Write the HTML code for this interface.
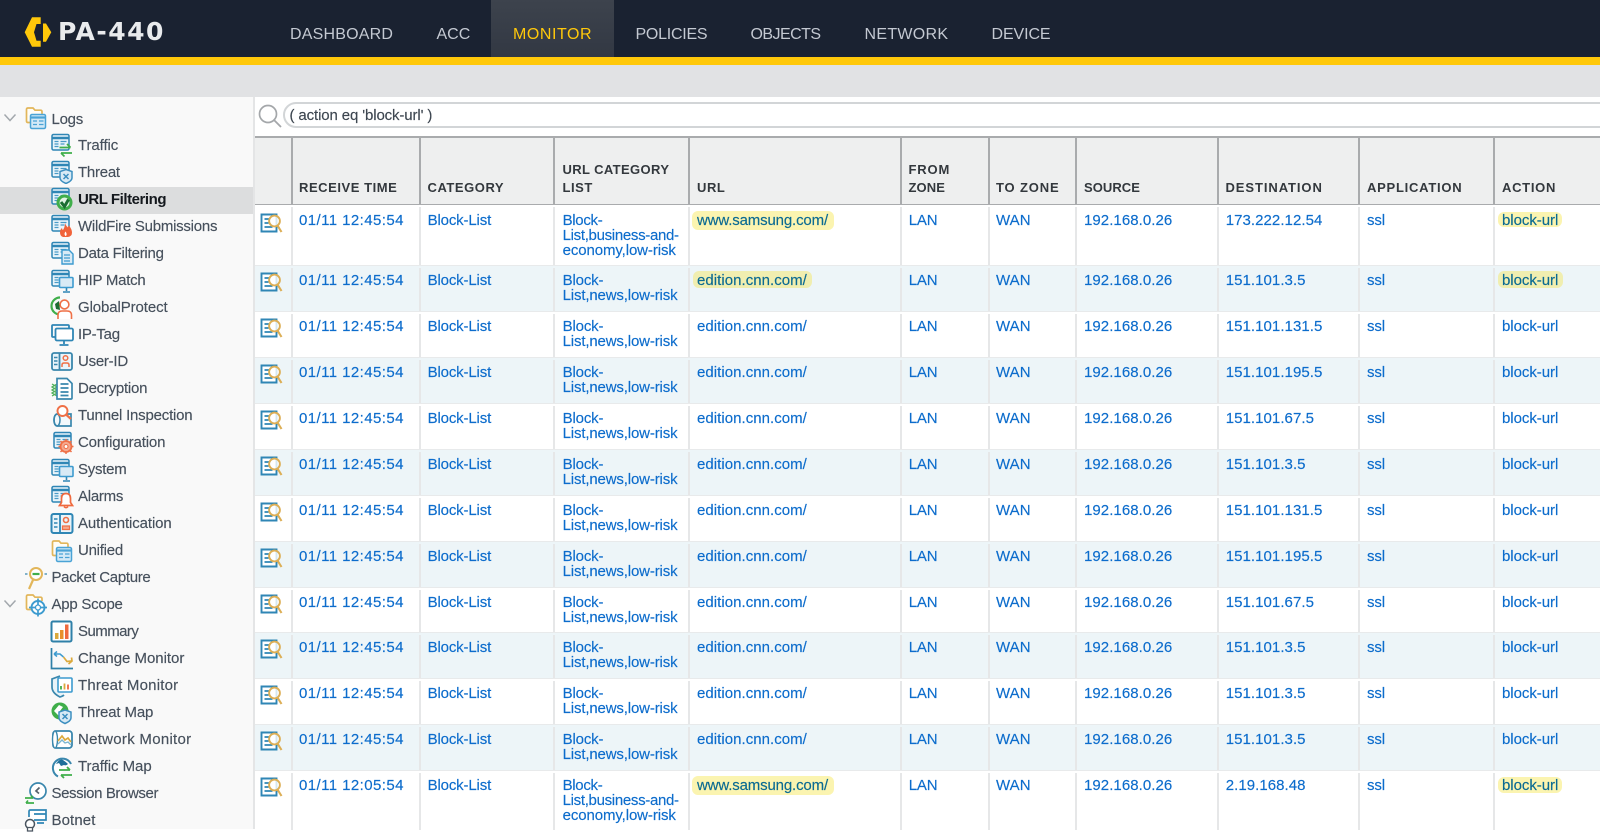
<!DOCTYPE html>
<html lang="en">
<head>
<meta charset="utf-8">
<title>PA-440 Monitor</title>
<style>
html,body{margin:0;padding:0;width:1600px;height:829px;overflow:hidden;background:#fff;font-family:"Liberation Sans",sans-serif}
div,span,svg{position:absolute;box-sizing:border-box}
.top{left:0;top:0;width:1600px;height:57px;background:#1a2231}
.yl{left:0;top:57px;width:1600px;height:8px;background:#ffc80a}
.gb{left:0;top:65px;width:1600px;height:32px;background:#e1e2e4}
.act{left:491px;top:0;width:123px;height:57px;background:linear-gradient(#3d434d,#323843)}
.n{top:26px;font-size:16px;line-height:18px;color:#c4c9d2;white-space:nowrap}
.logo{left:58px;top:15px;font:bold 25px/34px "DejaVu Sans",sans-serif;letter-spacing:1.5px;color:#e9ebed;white-space:nowrap}
.side{left:0;top:97px;width:253px;height:732px;background:#f9f9f9}
.sdiv{left:253px;top:97px;width:2px;height:732px;background:#e4e5e6}
.sel{left:0;top:187px;width:253px;height:26.5px;background:#dcddde}
.s{font-size:15px;line-height:18px;color:#46505c;letter-spacing:-.25px;white-space:nowrap;left:78px;-webkit-text-stroke:.15px #46505c}
.p{left:51.5px}
.b{font-weight:bold;color:#14181d;letter-spacing:-.45px;-webkit-text-stroke:0}
.i{width:24px;height:24px;left:50px}
.ip{left:24px}
.q{left:283px;top:102px;width:1330px;height:26px;border:2px solid #d2d5d7;border-radius:13px 0 0 13px;background:#fff}
.qt{left:289.5px;top:106.5px;font-size:15px;line-height:18px;color:#3d4650;letter-spacing:-.12px;white-space:nowrap;-webkit-text-stroke:.15px #3d4650}
.hd{left:255px;top:135.5px;width:1345px;height:70.5px;background:#eeefef;border-top:2px solid #a9abad;border-bottom:2px solid #a9abad}
.hs{top:136px;width:2px;height:70px;background:#a9abad}
.h{font-weight:bold;font-size:13px;line-height:18px;color:#33383d;letter-spacing:.55px;white-space:nowrap}
.r{left:255px;width:1345px;background-color:#fff;border-top:1px solid #e8eaeb;overflow:hidden;
background-image:linear-gradient(#e6e7e8,#e6e7e8),linear-gradient(#e6e7e8,#e6e7e8),linear-gradient(#e6e7e8,#e6e7e8),linear-gradient(#e6e7e8,#e6e7e8),linear-gradient(#e6e7e8,#e6e7e8),linear-gradient(#e6e7e8,#e6e7e8),linear-gradient(#e6e7e8,#e6e7e8),linear-gradient(#e6e7e8,#e6e7e8),linear-gradient(#e6e7e8,#e6e7e8),linear-gradient(#e6e7e8,#e6e7e8);
background-repeat:no-repeat;background-size:2px 100%;
background-position:36px 2px,163.6px 2px,298px 2px,433px 2px,645px 2px,732.7px 2px,820px 2px,961.7px 2px,1103px 2px,1238px 2px}
.a{background-color:#edf5f8}
.c{top:7px;font-size:15px;line-height:15px;color:#0c6ccc;white-space:nowrap;letter-spacing:-.15px;-webkit-text-stroke:.15px currentColor}
.c1{left:44px;letter-spacing:.42px}.c2{left:172.6px}.c3{left:307.6px}.c4{left:442px;letter-spacing:.04px}.c5{left:653.7px}.c6{left:741px;letter-spacing:.05px}.c7{left:829px;letter-spacing:.06px}.c8{left:970.7px;letter-spacing:.06px}.c9{left:1112px}.c10{left:1247px;letter-spacing:-.05px}
.ws{letter-spacing:-.15px}
.biz{letter-spacing:-.31px}
.biz i{font-style:normal;letter-spacing:-.1px}
.hl{color:#0a6a92;z-index:2}
.m{background:#fbf4b0;border-radius:6px;z-index:1}
.a .m{background:#f0eeb0}
.ri{left:5px;top:5px;width:24px;height:24px}
</style>
</head>
<body>
<svg width="0" height="0" style="left:0;top:0">
<defs>
<g id="tb"><rect x="2" y="1.5" width="17" height="15.5" rx="1.5" fill="#e9f4fa" stroke="#2f86b5" stroke-width="1.5"/><path d="M2 5h17" stroke="#2f86b5" stroke-width="2.6"/><path d="M4.5 8.5h4M4.5 11h4M4.5 13.5h4M10.5 8.5h6M10.5 11h4" stroke="#4a9ac6" stroke-width="1.3"/></g>
<g id="fd"><path d="M2.5 15V3.500q0-1.500 1.500-1.500h5l2 2.200h5.500q1.500 0 1.500 1.500V8" fill="#fffdf6" stroke="#e2b65a" stroke-width="1.700"/><path d="M2.500 15q0 1.500 1.500 1.500h3" fill="none" stroke="#e2b65a" stroke-width="1.700"/></g>
<symbol id="i-logs" viewBox="0 0 24 24"><use href="#fd"/><rect x="6.500" y="8.500" width="15" height="14" rx="1.500" fill="#d3e9f6" stroke="#4aa3d6" stroke-width="1.500"/><path d="M6.500 11.500h15" stroke="#4aa3d6" stroke-width="2.200"/><path d="M9 15h4M9 18.500h4M15 15h4.500M15 18.500h4.500" stroke="#4aa3d6" stroke-width="1.300"/></symbol>
<symbol id="i-traffic" viewBox="0 0 24 24"><use href="#tb"/><path d="M9.500 14.500h11m-3.500-3.500l3.500 3.500M22 20H11m3.500 3.500L11 20" fill="none" stroke="#3fae4a" stroke-width="1.700"/></symbol>
<symbol id="i-threat" viewBox="0 0 24 24"><use href="#tb"/><path d="M16 9.500l6 2v6.500q0 3-6 5.500q-6-2.500-6-5.500v-6.500z" fill="#d8eaf5" stroke="#3d8fc0" stroke-width="1.500"/><path d="M13.500 14l5 5m0-5l-5 5" stroke="#3d8fc0" stroke-width="1.500"/></symbol>
<symbol id="i-url" viewBox="0 0 24 24"><use href="#tb"/><circle cx="14.500" cy="15.500" r="8" fill="#3fae4a"/><circle cx="14.500" cy="15.500" r="5" fill="#fff" opacity=".85"/><path d="M11 15l3.500 4.500 4-7" fill="none" stroke="#1c6e32" stroke-width="3"/></symbol>
<symbol id="i-fire" viewBox="0 0 24 24"><use href="#tb"/><path d="M15 9q1 3 3 4.500q0-1.500 1-2q3 4 3 7q0 4-4 4.500h-5q-3-1-3-4.500q0-3 2-4.500q0 1.500 1 2q2-3 2-7z" fill="#f1633a"/><path d="M15.500 22q-2-2 0-4.500q2 2.500 .5 4.500z" fill="#fff"/></symbol>
<symbol id="i-data" viewBox="0 0 24 24"><use href="#tb"/><path d="M12 9h7l4 4v10H12z" fill="#d8eaf5" stroke="#3d9bcf" stroke-width="1.400"/><path d="M14 14h6M14 17h6M14 20h6" stroke="#3d9bcf" stroke-width="1.300"/></symbol>
<symbol id="i-hip" viewBox="0 0 24 24"><use href="#tb"/><rect x="9.500" y="8.500" width="13.500" height="10" rx="1" fill="#d8eaf5" stroke="#3d9bcf" stroke-width="1.600"/><path d="M16.500 19v3M13 23h7" stroke="#2f86b5" stroke-width="1.600"/></symbol>
<symbol id="i-gp" viewBox="0 0 24 24"><path d="M10 1.500a8.500 8.500 0 1 0 0 17" fill="none" stroke="#3fae4a" stroke-width="2.200"/><path d="M9 5l-4 3 1 5 4 1z" fill="#1d6d32"/><circle cx="14.500" cy="8.500" r="4.400" fill="#fff" stroke="#ef7047" stroke-width="1.600"/><path d="M8 23v-4q0-4 4-4h5q4.500 0 4.500 4v4" fill="#fff" stroke="#ef7047" stroke-width="1.600"/></symbol>
<symbol id="i-ip" viewBox="0 0 24 24"><path d="M5 14H3q-1 0-1-1V3q0-1 1-1h15q1 0 1 1v2" fill="none" stroke="#2f86b5" stroke-width="1.800"/><rect x="5.500" y="5.500" width="17.500" height="12" rx="1.500" fill="#fff" stroke="#2f86b5" stroke-width="1.800"/><path d="M14 18v3M9.500 22h9" stroke="#2f86b5" stroke-width="1.800"/></symbol>
<symbol id="i-user" viewBox="0 0 24 24"><rect x="2" y="3" width="20" height="17" rx="2" fill="#e9f4fa" stroke="#3a87ad" stroke-width="1.800"/><path d="M9.500 3v17" stroke="#3a87ad" stroke-width="1.800"/><path d="M4 7.500h3.500M4 11h3.500M4 14.500h3.500" stroke="#3a87ad" stroke-width="1.500"/><circle cx="15.500" cy="8" r="2.300" fill="none" stroke="#ef7047" stroke-width="1.500"/><path d="M12 17v-2q0-2 2-2h3q2 0 2 2v2" fill="none" stroke="#ef7047" stroke-width="1.500"/></symbol>
<symbol id="i-dec" viewBox="0 0 24 24"><path d="M2 7l5 3-5 3 5 3-5 3M7 7l-5 3 5 3-5 3 5 3" fill="none" stroke="#4fb05a" stroke-width="1.300"/><path d="M7 1.500h10l5 5V21q0 1-1 1H7z" fill="#fff" stroke="#3a87ad" stroke-width="1.700"/><path d="M10.500 7h8M10.500 11h8M10.500 15h8M10.500 18.500h8" stroke="#3a87ad" stroke-width="1.700"/></symbol>
<symbol id="i-tun" viewBox="0 0 24 24"><path d="M7 10H21V22H7q-3-1-3-6t3-6z" fill="#f3f9fc" stroke="#3a87ad" stroke-width="1.700"/><ellipse cx="7" cy="16" rx="3" ry="6" fill="none" stroke="#3a87ad" stroke-width="1.500"/><circle cx="12.500" cy="7" r="5" fill="#fff" stroke="#ef7047" stroke-width="1.900"/><path d="M16 10.500l5 4.500" stroke="#ef7047" stroke-width="2.200"/></symbol>
<symbol id="i-cfg" viewBox="0 0 24 24"><g transform="translate(2 0)"><use href="#tb"/></g><circle cx="16" cy="15.500" r="5.500" fill="#f5a98f" stroke="#ef7047" stroke-width="1.800"/><circle cx="16" cy="15.500" r="2" fill="#fff" stroke="#ef7047" stroke-width="1.100"/><path d="M16 8v2.500M16 20.500V23M8.500 15.500H11M21 15.500h2.500M10.500 10l2 2M19.500 19l2 2M21.500 10l-2 2M12.500 19l-2 2" stroke="#ef7047" stroke-width="1.500"/></symbol>
<symbol id="i-bell" viewBox="0 0 24 24"><use href="#tb"/><path d="M16 8.500q4.500 0 4.500 5v4l2 3H9.500l2-3v-4q0-5 4.500-5z" fill="#fff" stroke="#ef6a3f" stroke-width="1.700"/><path d="M14 21.500q2 2.500 4 0" stroke="#ef6a3f" stroke-width="1.600" fill="none"/></symbol>
<symbol id="i-auth" viewBox="0 0 24 24"><rect x="1.500" y="2" width="21" height="19" rx="2" fill="#e9f4fa" stroke="#2f86b5" stroke-width="2"/><path d="M10 2v19" stroke="#2f86b5" stroke-width="1.800"/><path d="M4 7h3.500M4 11h3.500M4 15h3.500" stroke="#2f86b5" stroke-width="1.500"/><circle cx="16" cy="8" r="2.500" fill="none" stroke="#ef7047" stroke-width="1.600"/><path d="M12.500 14h7v3.500h-7z" fill="#f5a98f" stroke="#ef7047" stroke-width="1.200"/></symbol>
<symbol id="i-pc" viewBox="0 0 24 24"><circle cx="12" cy="8" r="6" fill="#fff" stroke="#e2b65a" stroke-width="2"/><path d="M8.500 8h7" stroke="#3fae4a" stroke-width="2.200"/><path d="M9 14L5 23" stroke="#e2b65a" stroke-width="2.200"/><path d="M1 8h2.500M20.500 8H23" stroke="#3a87ad" stroke-width="1.300"/></symbol>
<symbol id="i-app" viewBox="0 0 24 24"><use href="#fd"/><circle cx="14" cy="14.500" r="6.500" fill="#fff" stroke="#3d9bcf" stroke-width="1.900"/><path d="M14 5.500v18M5 14.500h18" stroke="#3d9bcf" stroke-width="1.700"/><circle cx="14" cy="14.500" r="2.500" fill="#fff" stroke="#3d9bcf" stroke-width="1.300"/></symbol>
<symbol id="i-sum" viewBox="0 0 24 24"><rect x="1.500" y="1.500" width="20" height="20" rx="1.500" fill="#fff" stroke="#2f80a8" stroke-width="2"/><path d="M5 13h3.500v6H5z" fill="#dba93c"/><path d="M10 10h3.500v9H10z" fill="#e8912c"/><path d="M15 4.500h3.500V19H15z" fill="#ef6a3f"/></symbol>
<symbol id="i-chg" viewBox="0 0 24 24"><path d="M1.500 1v20.500H23" fill="none" stroke="#2f80a8" stroke-width="1.700"/><path d="M4 7l3-2.500M4 7l3 2.500M4 7h6l3.500 3" fill="none" stroke="#3d9bcf" stroke-width="1.500"/><path d="M13.500 10l3.500 4.500 5-.5m-3.500 3l3.500-3-.5-3.500" fill="none" stroke="#dba93c" stroke-width="1.700"/></symbol>
<symbol id="i-tm" viewBox="0 0 24 24"><path d="M10 2L2 5v8q0 6 8 10q3-1 4-2" fill="#e9f3f8" stroke="#3a87ad" stroke-width="1.700"/><rect x="8" y="4" width="14" height="14" rx="1" fill="#fff" stroke="#3d9bcf" stroke-width="1.600"/><path d="M11 12v3.500" stroke="#3fae4a" stroke-width="1.800"/><path d="M14.500 9.500v6" stroke="#dba93c" stroke-width="1.800"/><path d="M18 10.500v5" stroke="#ef6a3f" stroke-width="1.800"/></symbol>
<symbol id="i-map" viewBox="0 0 24 24"><circle cx="10" cy="10" r="8.500" fill="#3fae4a"/><path d="M4 10l5-6 4 2-3 4 3 3-3 3z" fill="#fff"/><path d="M15 9l6 2v6q0 3-6 5.500q-6-2.500-6-5.500v-6z" fill="#d8eaf5" stroke="#3d8fc0" stroke-width="1.500"/><path d="M12.500 13l5 5m0-5l-5 5" stroke="#3d8fc0" stroke-width="1.500"/></symbol>
<symbol id="i-net" viewBox="0 0 24 24"><rect x="3" y="3" width="19" height="17" rx="3" fill="#fff" stroke="#3a87ad" stroke-width="1.800"/><ellipse cx="5" cy="11.500" rx="2.500" ry="8.500" fill="#fff" stroke="#3a87ad" stroke-width="1.400"/><path d="M8 13l4-5 3 4 3-2 3 4" fill="none" stroke="#dba93c" stroke-width="1.700"/><path d="M8 16l4-4 3 3 3-1 3 3" fill="none" stroke="#7bb5d0" stroke-width="1.400"/></symbol>
<symbol id="i-tmap" viewBox="0 0 24 24"><path d="M8 21.500A9.500 9.500 0 1 1 21 9" fill="#fff" stroke="#3a87ad" stroke-width="2"/><path d="M6 9q4-6 7-4t5 4q-2 2-4 1l-3 1-2-3z" fill="#1f6f9a"/><path d="M9 15h11m-3-3l3 3M22 20H11m3 3l-3-3" fill="none" stroke="#3fae4a" stroke-width="1.800"/></symbol>
<symbol id="i-ses" viewBox="0 0 24 24"><circle cx="14" cy="9" r="8" fill="#fff" stroke="#3a87ad" stroke-width="1.700"/><path d="M15.500 5.500L12 9l3 2.500" fill="none" stroke="#55606b" stroke-width="1.700"/><path d="M1 16h8m-2-2.500l2 2.500M10 21H2m2-2.500L2 21" fill="none" stroke="#3fae4a" stroke-width="1.700"/></symbol>
<symbol id="i-bot" viewBox="0 0 24 24"><path d="M5 9V3.500q0-1.500 1.500-1.500H22v10H10" fill="#fff" stroke="#2f86b5" stroke-width="1.700"/><path d="M10 6h12M13 15h7" stroke="#2f86b5" stroke-width="1.700"/><circle cx="6" cy="16" r="4.500" fill="#fff" stroke="#4a5560" stroke-width="1.500"/><path d="M3.500 19.500h5V23h-5z" fill="#fff" stroke="#4a5560" stroke-width="1.300"/></symbol>
<symbol id="i-row" viewBox="0 0 24 24"><path d="M1.500 2.500h15v17h-15z" fill="#fff" stroke="#2f86b5" stroke-width="1.900"/><path d="M4.500 7h6M4.500 11h4M4.500 15h8" stroke="#2f86b5" stroke-width="1.700"/><circle cx="14.500" cy="9" r="5.400" fill="#fff" fill-opacity=".8" stroke="#dcae55" stroke-width="1.900"/><path d="M17.500 13.500l4 6.500" stroke="#dcae55" stroke-width="2.100"/></symbol>
</defs>
</svg>

<div class="top"></div>
<div class="act"></div>
<div class="yl"></div>
<div class="gb"></div>
<svg style="left:18px;top:10px" width="60" height="45" viewBox="0 0 60 45"><path d="M14 7.300H22.700V14H18.500L16 22.300L18.500 30.700H22.700V36.700H14L6.700 22.300Z" fill="#ffc80a"/><path d="M25 13.500H28L33.300 22.300L28 31.700H25Z" fill="#ffc80a"/></svg>
<div class="logo">PA-440</div>
<div class="n" style="left:290px;letter-spacing:.2px">DASHBOARD</div>
<div class="n" style="left:436.5px">ACC</div>
<div class="n" style="left:513px;color:#ffc80a;letter-spacing:.55px">MONITOR</div>
<div class="n" style="left:635.5px;letter-spacing:-.25px">POLICIES</div>
<div class="n" style="left:750.5px;letter-spacing:-.55px">OBJECTS</div>
<div class="n" style="left:864.5px;letter-spacing:.3px">NETWORK</div>
<div class="n" style="left:991.5px;letter-spacing:-.1px">DEVICE</div>

<div class="side"></div>
<div class="sel"></div>
<div class="sdiv"></div>
<svg style="left:3px;top:113px" width="14" height="10" viewBox="0 0 14 10"><path d="M1.500 1.500L7 7.500l5.500-6" fill="none" stroke="#a3a8ad" stroke-width="1.500"/></svg>
<svg style="left:3px;top:599px" width="14" height="10" viewBox="0 0 14 10"><path d="M1.500 1.500L7 7.500l5.500-6" fill="none" stroke="#a3a8ad" stroke-width="1.500"/></svg>

<svg class="i ip" style="top:106px"><use href="#i-logs"/></svg><div class="s p" style="top:110.500px">Logs</div>
<svg class="i" style="top:133px"><use href="#i-traffic"/></svg><div class="s" style="top:137px;letter-spacing:-.1px">Traffic</div>
<svg class="i" style="top:160px"><use href="#i-threat"/></svg><div class="s" style="top:164px">Threat</div>
<svg class="i" style="top:187px"><use href="#i-url"/></svg><div class="s b" style="top:191px">URL Filtering</div>
<svg class="i" style="top:214px"><use href="#i-fire"/></svg><div class="s" style="top:218px">WildFire Submissions</div>
<svg class="i" style="top:241px"><use href="#i-data"/></svg><div class="s" style="top:245px">Data Filtering</div>
<svg class="i" style="top:269px"><use href="#i-hip"/></svg><div class="s" style="top:272px">HIP Match</div>
<svg class="i" style="top:296px"><use href="#i-gp"/></svg><div class="s" style="top:299px;letter-spacing:-.1px">GlobalProtect</div>
<svg class="i" style="top:323px"><use href="#i-ip"/></svg><div class="s" style="top:326px">IP-Tag</div>
<svg class="i" style="top:350px"><use href="#i-user"/></svg><div class="s" style="top:353px">User-ID</div>
<svg class="i" style="top:377px"><use href="#i-dec"/></svg><div class="s" style="top:380px">Decryption</div>
<svg class="i" style="top:404px"><use href="#i-tun"/></svg><div class="s" style="top:407px;letter-spacing:-.2px">Tunnel Inspection</div>
<svg class="i" style="top:431px"><use href="#i-cfg"/></svg><div class="s" style="top:434px;letter-spacing:-.15px">Configuration</div>
<svg class="i" style="top:458px"><use href="#i-hip"/></svg><div class="s" style="top:461px">System</div>
<svg class="i" style="top:485px"><use href="#i-bell"/></svg><div class="s" style="top:488px">Alarms</div>
<svg class="i" style="top:512px"><use href="#i-auth"/></svg><div class="s" style="top:515px;letter-spacing:-.1px">Authentication</div>
<svg class="i" style="top:539px"><use href="#i-logs"/></svg><div class="s" style="top:542px">Unified</div>
<svg class="i ip" style="top:566px"><use href="#i-pc"/></svg><div class="s p" style="top:569px;letter-spacing:-.32px">Packet Capture</div>
<svg class="i ip" style="top:593px"><use href="#i-app"/></svg><div class="s p" style="top:596px">App Scope</div>
<svg class="i" style="top:620px"><use href="#i-sum"/></svg><div class="s" style="top:623px;letter-spacing:-.55px">Summary</div>
<svg class="i" style="top:647px"><use href="#i-chg"/></svg><div class="s" style="top:650px;letter-spacing:-.03px">Change Monitor</div>
<svg class="i" style="top:674px"><use href="#i-tm"/></svg><div class="s" style="top:677px;letter-spacing:.2px">Threat Monitor</div>
<svg class="i" style="top:701px"><use href="#i-map"/></svg><div class="s" style="top:704px;letter-spacing:-.15px">Threat Map</div>
<svg class="i" style="top:728px"><use href="#i-net"/></svg><div class="s" style="top:731px;letter-spacing:.28px">Network Monitor</div>
<svg class="i" style="top:755px"><use href="#i-tmap"/></svg><div class="s" style="top:758px;letter-spacing:-.05px">Traffic Map</div>
<svg class="i ip" style="top:782px"><use href="#i-ses"/></svg><div class="s p" style="top:785px;letter-spacing:-.4px">Session Browser</div>
<svg class="i ip" style="top:808px"><use href="#i-bot"/></svg><div class="s p" style="top:812px;letter-spacing:.1px">Botnet</div>

<svg style="left:254px;top:582px" width="6" height="12" viewBox="0 0 6 12"><path d="M5 2v8L1 6z" fill="#a6a9ac"/></svg>

<svg style="left:257px;top:103px" width="26" height="26" viewBox="0 0 26 26"><circle cx="11" cy="11" r="8.500" fill="none" stroke="#a4a7aa" stroke-width="1.700"/><path d="M17 17l7 7" stroke="#a4a7aa" stroke-width="1.800"/></svg>
<div class="q"></div>
<div class="qt">( action eq 'block-url' )</div>

<div class="hd"></div>
<div class="hs" style="left:291px"></div>
<div class="hs" style="left:418.6px"></div>
<div class="hs" style="left:553px"></div>
<div class="hs" style="left:688px"></div>
<div class="hs" style="left:900px"></div>
<div class="hs" style="left:987.7px"></div>
<div class="hs" style="left:1075px"></div>
<div class="hs" style="left:1216.7px"></div>
<div class="hs" style="left:1358px"></div>
<div class="hs" style="left:1493px"></div>
<div class="h" style="left:299px;top:179px">RECEIVE TIME</div>
<div class="h" style="left:427.5px;top:179px">CATEGORY</div>
<div class="h" style="left:562.5px;top:161px;letter-spacing:.38px">URL CATEGORY</div>
<div class="h" style="left:562.5px;top:179px">LIST</div>
<div class="h" style="left:697px;top:179px">URL</div>
<div class="h" style="left:908.5px;top:161px;letter-spacing:.85px">FROM</div>
<div class="h" style="left:908.5px;top:179px;letter-spacing:.1px">ZONE</div>
<div class="h" style="left:996px;top:179px;letter-spacing:.85px">TO ZONE</div>
<div class="h" style="left:1084px;top:179px;letter-spacing:.05px">SOURCE</div>
<div class="h" style="left:1225.5px;top:179px;letter-spacing:.92px">DESTINATION</div>
<div class="h" style="left:1367px;top:179px;letter-spacing:.75px">APPLICATION</div>
<div class="h" style="left:1502px;top:179px;letter-spacing:.7px">ACTION</div>

<div class="r" style="top:205px;height:60.2px;border-top:0"><svg class="ri" viewBox="0 0 24 24" style="top:7px"><use href="#i-row"/></svg><span class="c c1" style="top:7.5px">01/11 12:45:54</span><span class="c c2" style="top:7.5px">Block-List</span><span class="c c3 biz" style="top:7.5px">Block-<br>List,business-and-<br><i>economy,low-risk</i></span><span class="m" style="left:437px;top:6px;width:141.5px;height:19px"></span><span class="c c4 hl ws" style="top:7.5px">www.samsung.com/</span><span class="c c5" style="top:7.5px">LAN</span><span class="c c6" style="top:7.5px">WAN</span><span class="c c7" style="top:7.5px">192.168.0.26</span><span class="c c8" style="top:7.5px">173.222.12.54</span><span class="c c9" style="top:7.5px">ssl</span><span class="m" style="left:1242.5px;top:7px;width:64.5px;height:15px"></span><span class="c c10 hl" style="top:7.5px">block-url</span></div>

<div class="r a" style="top:265.2px;height:46px"><svg class="ri" viewBox="0 0 24 24"><use href="#i-row"/></svg><span class="c c1">01/11 12:45:54</span><span class="c c2">Block-List</span><span class="c c3">Block-<br>List,news,low-risk</span><span class="m" style="left:437.5px;top:5px;width:119px;height:17px"></span><span class="c c4 hl">edition.cnn.com/</span><span class="c c5">LAN</span><span class="c c6">WAN</span><span class="c c7">192.168.0.26</span><span class="c c8">151.101.3.5</span><span class="c c9">ssl</span><span class="m" style="left:1242.5px;top:5px;width:65px;height:17px"></span><span class="c c10 hl">block-url</span></div>

<div class="r" style="top:311.05px;height:46px"><svg class="ri" viewBox="0 0 24 24"><use href="#i-row"/></svg><span class="c c1">01/11 12:45:54</span><span class="c c2">Block-List</span><span class="c c3">Block-<br>List,news,low-risk</span><span class="c c4">edition.cnn.com/</span><span class="c c5">LAN</span><span class="c c6">WAN</span><span class="c c7">192.168.0.26</span><span class="c c8">151.101.131.5</span><span class="c c9">ssl</span><span class="c c10">block-url</span></div>

<div class="r a" style="top:356.9px;height:46px"><svg class="ri" viewBox="0 0 24 24"><use href="#i-row"/></svg><span class="c c1">01/11 12:45:54</span><span class="c c2">Block-List</span><span class="c c3">Block-<br>List,news,low-risk</span><span class="c c4">edition.cnn.com/</span><span class="c c5">LAN</span><span class="c c6">WAN</span><span class="c c7">192.168.0.26</span><span class="c c8">151.101.195.5</span><span class="c c9">ssl</span><span class="c c10">block-url</span></div>

<div class="r" style="top:402.75px;height:46px"><svg class="ri" viewBox="0 0 24 24"><use href="#i-row"/></svg><span class="c c1">01/11 12:45:54</span><span class="c c2">Block-List</span><span class="c c3">Block-<br>List,news,low-risk</span><span class="c c4">edition.cnn.com/</span><span class="c c5">LAN</span><span class="c c6">WAN</span><span class="c c7">192.168.0.26</span><span class="c c8">151.101.67.5</span><span class="c c9">ssl</span><span class="c c10">block-url</span></div>

<div class="r a" style="top:448.6px;height:46px"><svg class="ri" viewBox="0 0 24 24"><use href="#i-row"/></svg><span class="c c1">01/11 12:45:54</span><span class="c c2">Block-List</span><span class="c c3">Block-<br>List,news,low-risk</span><span class="c c4">edition.cnn.com/</span><span class="c c5">LAN</span><span class="c c6">WAN</span><span class="c c7">192.168.0.26</span><span class="c c8">151.101.3.5</span><span class="c c9">ssl</span><span class="c c10">block-url</span></div>

<div class="r" style="top:495px;height:46px"><svg class="ri" viewBox="0 0 24 24"><use href="#i-row"/></svg><span class="c c1">01/11 12:45:54</span><span class="c c2">Block-List</span><span class="c c3">Block-<br>List,news,low-risk</span><span class="c c4">edition.cnn.com/</span><span class="c c5">LAN</span><span class="c c6">WAN</span><span class="c c7">192.168.0.26</span><span class="c c8">151.101.131.5</span><span class="c c9">ssl</span><span class="c c10">block-url</span></div>

<div class="r a" style="top:541px;height:46px"><svg class="ri" viewBox="0 0 24 24"><use href="#i-row"/></svg><span class="c c1">01/11 12:45:54</span><span class="c c2">Block-List</span><span class="c c3">Block-<br>List,news,low-risk</span><span class="c c4">edition.cnn.com/</span><span class="c c5">LAN</span><span class="c c6">WAN</span><span class="c c7">192.168.0.26</span><span class="c c8">151.101.195.5</span><span class="c c9">ssl</span><span class="c c10">block-url</span></div>

<div class="r" style="top:587px;height:46px"><svg class="ri" viewBox="0 0 24 24"><use href="#i-row"/></svg><span class="c c1">01/11 12:45:54</span><span class="c c2">Block-List</span><span class="c c3">Block-<br>List,news,low-risk</span><span class="c c4">edition.cnn.com/</span><span class="c c5">LAN</span><span class="c c6">WAN</span><span class="c c7">192.168.0.26</span><span class="c c8">151.101.67.5</span><span class="c c9">ssl</span><span class="c c10">block-url</span></div>

<div class="r a" style="top:632.3px;height:46px"><svg class="ri" viewBox="0 0 24 24"><use href="#i-row"/></svg><span class="c c1">01/11 12:45:54</span><span class="c c2">Block-List</span><span class="c c3">Block-<br>List,news,low-risk</span><span class="c c4">edition.cnn.com/</span><span class="c c5">LAN</span><span class="c c6">WAN</span><span class="c c7">192.168.0.26</span><span class="c c8">151.101.3.5</span><span class="c c9">ssl</span><span class="c c10">block-url</span></div>

<div class="r" style="top:677.85px;height:46px"><svg class="ri" viewBox="0 0 24 24"><use href="#i-row"/></svg><span class="c c1">01/11 12:45:54</span><span class="c c2">Block-List</span><span class="c c3">Block-<br>List,news,low-risk</span><span class="c c4">edition.cnn.com/</span><span class="c c5">LAN</span><span class="c c6">WAN</span><span class="c c7">192.168.0.26</span><span class="c c8">151.101.3.5</span><span class="c c9">ssl</span><span class="c c10">block-url</span></div>

<div class="r a" style="top:723.7px;height:46px"><svg class="ri" viewBox="0 0 24 24"><use href="#i-row"/></svg><span class="c c1">01/11 12:45:54</span><span class="c c2">Block-List</span><span class="c c3">Block-<br>List,news,low-risk</span><span class="c c4">edition.cnn.com/</span><span class="c c5">LAN</span><span class="c c6">WAN</span><span class="c c7">192.168.0.26</span><span class="c c8">151.101.3.5</span><span class="c c9">ssl</span><span class="c c10">block-url</span></div>

<div class="r" style="top:769.55px;height:60px"><svg class="ri" viewBox="0 0 24 24"><use href="#i-row"/></svg><span class="c c1">01/11 12:05:54</span><span class="c c2">Block-List</span><span class="c c3 biz">Block-<br>List,business-and-<br><i>economy,low-risk</i></span><span class="m" style="left:437px;top:5px;width:141.5px;height:19px"></span><span class="c c4 hl ws">www.samsung.com/</span><span class="c c5">LAN</span><span class="c c6">WAN</span><span class="c c7">192.168.0.26</span><span class="c c8">2.19.168.48</span><span class="c c9">ssl</span><span class="m" style="left:1242.5px;top:6px;width:64.5px;height:16px"></span><span class="c c10 hl">block-url</span></div>
</body>
</html>
